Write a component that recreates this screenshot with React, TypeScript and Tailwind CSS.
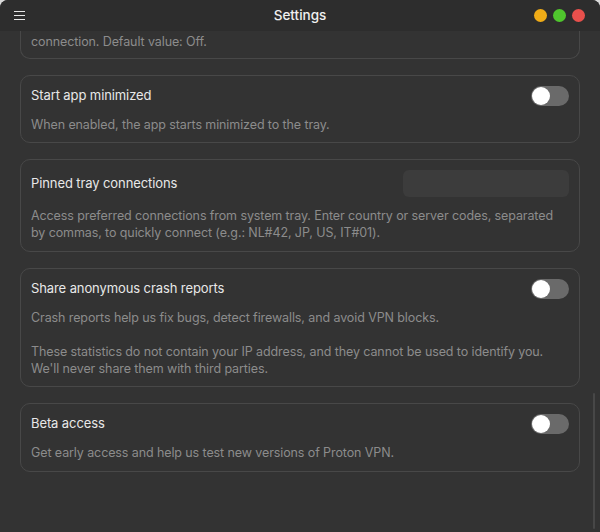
import type { ReactNode } from 'react'

function Toggle() {
  return (
    <div className="flex h-5 w-[38px] shrink-0 items-center rounded-full bg-[#6a6a6a] p-px">
      <div className="h-[18px] w-[18px] rounded-full bg-white" />
    </div>
  )
}

function Card({
  title,
  control,
  children,
}: {
  title: string
  control: ReactNode
  children: ReactNode
}) {
  return (
    <div className="rounded-[10px] border border-[#484848] px-[10px] pb-[9.5px] pt-[10px]">
      <div className="flex items-center justify-between gap-4">
        <div className="text-[13px] tracking-[-0.1px] text-[#e8e8e8]">{title}</div>
        {control}
      </div>
      <div className="mt-[10px] text-[12.5px] leading-[17px] tracking-[-0.1px] text-[#8c8c8c]">
        {children}
      </div>
    </div>
  )
}

export default function App() {
  return (
    <div className="h-[532px] w-[600px] bg-[#d9d9d9] font-['Inter',sans-serif]">
      <div className="flex h-full flex-col overflow-hidden rounded-t-[8px] bg-[#333333]">
        <div className="relative flex h-[31px] shrink-0 items-center bg-[#2d2d2d] px-[14px]">
          <svg width="11" height="9" viewBox="0 0 11 9" className="text-[#e6e6e6]">
            <path d="M0 0.5H11M0 4.5H11M0 8.5H11" stroke="currentColor" strokeWidth="1" />
          </svg>
          <div className="absolute inset-x-0 top-0 flex h-full items-center justify-center text-[13.5px] font-medium text-[#f0f0f0]">
            Settings
          </div>
          <div className="ml-auto flex items-center gap-[6px] pr-[1px]">
            <div className="h-[13px] w-[13px] rounded-full bg-[#f0ac17]" />
            <div className="h-[13px] w-[13px] rounded-full bg-[#4fc62d]" />
            <div className="h-[13px] w-[13px] rounded-full bg-[#e8504c]" />
          </div>
        </div>

        <div className="relative flex-1 overflow-hidden">
          <div className="flex flex-col gap-4 px-5">
            <div className="rounded-b-[10px] border border-t-0 border-[#484848] px-[10px] pb-[8px] pt-[1.5px]">
              <div className="text-[12.5px] leading-[17px] tracking-[-0.1px] text-[#8c8c8c]">
                connection. Default value: Off.
              </div>
            </div>

            <Card title="Start app minimized" control={<Toggle />}>
              When enabled, the app starts minimized to the tray.
            </Card>

            <Card
              title="Pinned tray connections"
              control={<div className="h-[27px] w-[166px] rounded-[6px] bg-[#3c3c3c]" />}
            >
              Access preferred connections from system tray. Enter country or server codes,
              separated by commas, to quickly connect (e.g.: NL#42, JP, US, IT#01).
            </Card>

            <Card title="Share anonymous crash reports" control={<Toggle />}>
              <p>Crash reports help us fix bugs, detect firewalls, and avoid VPN blocks.</p>
              <p className="mt-[17px]">
                These statistics do not contain your IP address, and they cannot be used to
                identify you. We'll never share them with third parties.
              </p>
            </Card>

            <Card title="Beta access" control={<Toggle />}>
              Get early access and help us test new versions of Proton VPN.
            </Card>
          </div>
          <div className="absolute right-[5px] top-[362px] h-[136px] w-[2px] rounded-full bg-[#474747]" />
        </div>
      </div>
    </div>
  )
}
